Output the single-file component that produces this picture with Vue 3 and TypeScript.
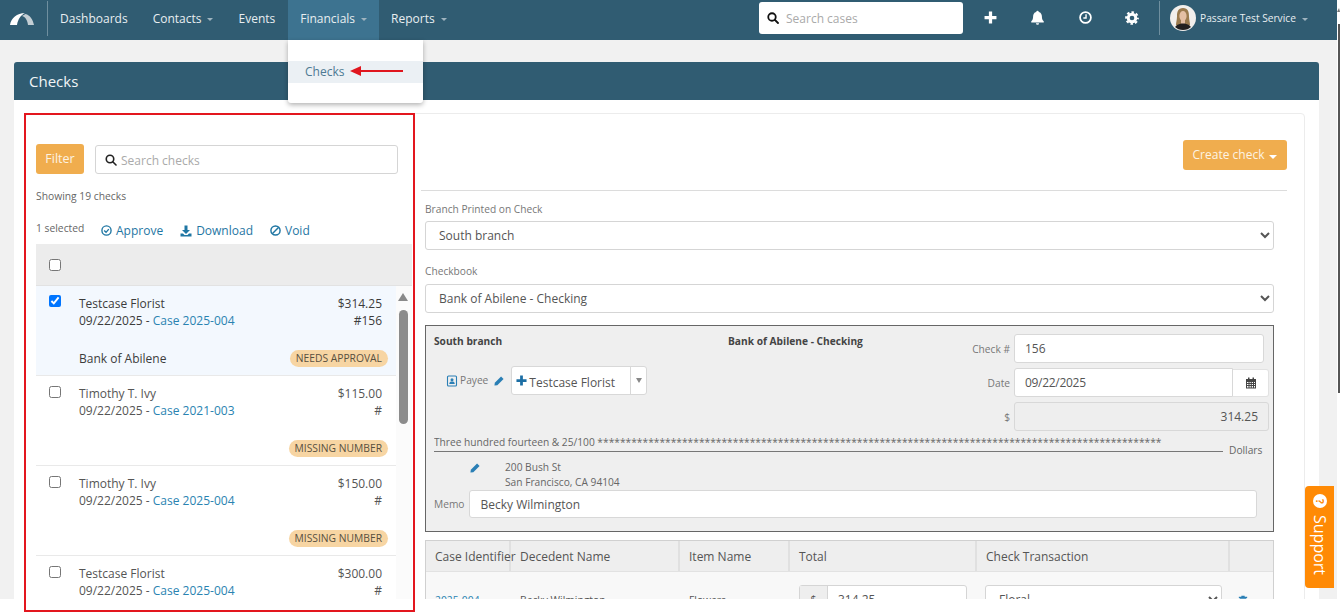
<script setup lang="ts">
interface CheckRow {
  name: string
  caseId: string
  amount: string
  num: string
  bank?: string
  badge: string
  selected?: boolean
}

const navItems = [
  { label: 'Dashboards', caret: false },
  { label: 'Contacts', caret: true },
  { label: 'Events', caret: false },
  { label: 'Financials', caret: true, active: true },
  { label: 'Reports', caret: true },
]

const rows: CheckRow[] = [
  { name: 'Testcase Florist', caseId: 'Case 2025-004', amount: '$314.25', num: '#156', bank: 'Bank of Abilene', badge: 'NEEDS APPROVAL', selected: true },
  { name: 'Timothy T. Ivy', caseId: 'Case 2021-003', amount: '$115.00', num: '#', badge: 'MISSING NUMBER' },
  { name: 'Timothy T. Ivy', caseId: 'Case 2025-004', amount: '$150.00', num: '#', badge: 'MISSING NUMBER' },
  { name: 'Testcase Florist', caseId: 'Case 2025-004', amount: '$300.00', num: '#', badge: 'MISSING NUMBER' },
]

const stars = '*'.repeat(100)
</script>

<template>
  <div class="page">
    <div class="shell">
      <div class="main">
        <!-- Top bar -->
        <header class="topbar">
          <div class="logo">
            <svg viewBox="0 0 24 12" width="24" height="12">
              <path d="M0 12C1 5 7 0 15 0 11 2 8 6 7 12z" fill="#fff" />
              <path d="M15.500 1C20 2 23 7 24 12h-6C17.500 8 16 4 12 3z" fill="#c3ced4" />
            </svg>
          </div>
          <nav class="nav">
            <a v-for="item in navItems" :key="item.label" class="nav-item" :class="{ active: item.active }">
              {{ item.label }}<span v-if="item.caret" class="caret"></span>
            </a>
          </nav>
          <div class="top-search">
            <svg viewBox="0 0 24 24" width="12" height="12" fill="none" stroke="#111" stroke-width="3.600">
              <circle cx="10" cy="10" r="7.500" />
              <path d="M15.500 15.500 22 22" stroke-linecap="round" />
            </svg>
            <span>Search cases</span>
          </div>
          <div class="top-icons">
            <svg viewBox="0 0 24 24" width="13" height="13" fill="#fff"><path d="M9 1h6v8h8v6h-8v8H9v-8H1V9h8z" /></svg>
            <svg viewBox="0 0 24 24" width="15" height="15" fill="#fff"><path d="M12 1a2 2 0 0 0-2 2C6.500 3.800 5 6.800 5 10c0 4.500-1.200 6.500-3 8v2h20v-2c-1.800-1.500-3-3.500-3-8 0-3.200-1.500-6.200-5-7a2 2 0 0 0-2-2zM9.500 21a2.500 2.500 0 0 0 5 0z" /></svg>
            <svg viewBox="0 0 24 24" width="13" height="13" fill="none" stroke="#fff" stroke-width="3.200"><circle cx="12" cy="12" r="10" /><path d="M13 6v7H8" stroke-width="2.600" /></svg>
            <svg viewBox="0 0 24 24" width="14" height="14" fill="none" stroke="#fff">
              <circle cx="12" cy="12" r="6.500" stroke-width="5" />
              <circle cx="12" cy="12" r="10" stroke-width="3.500" stroke-dasharray="4.300 3.550" stroke-dashoffset="2.100" />
            </svg>
          </div>
          <div class="top-user">
            <svg class="avatar" viewBox="0 0 26 26" width="26" height="26">
              <circle cx="13" cy="13" r="13" fill="#f2efec" />
              <clipPath id="avatar-clip"><circle cx="13" cy="13" r="12" /></clipPath>
              <g clip-path="url(#avatar-clip)">
                <path d="M13 3c-5 0-6 4-6 8 0 4-1 6-1 9h14c0-3-1-5-1-9 0-4-1-8-6-8z" fill="#9a7a4e" />
                <ellipse cx="13" cy="11" rx="3.600" ry="5" fill="#e4bfa4" />
                <path d="M11 15h4v4h-4z" fill="#e4bfa4" />
                <path d="M4 26c0-5 4-7.500 9-7.500s9 2.500 9 7.500z" fill="#23201f" />
              </g>
            </svg>
            <span>Passare Test Service</span><span class="caret"></span>
          </div>
        </header>

        <div class="content">
          <div class="panel-title">Checks</div>
          <div class="panel">
            <div class="card">
              <!-- Check list -->
              <section class="left">
                <div class="filter-row">
                  <button class="btn-orange filter">Filter</button>
                  <div class="list-search">
                    <svg viewBox="0 0 24 24" width="12" height="12" fill="none" stroke="#222" stroke-width="3.200">
                      <circle cx="10" cy="10" r="7.500" />
                      <path d="M15.500 15.500 22 22" stroke-linecap="round" />
                    </svg>
                    <span>Search checks</span>
                  </div>
                </div>
                <div class="showing">Showing 19 checks</div>
                <div class="actions">
                  <span class="sel-count">1 selected</span>
                  <a class="action first">
                    <svg viewBox="0 0 24 24" width="11" height="11" fill="none" stroke="currentColor" stroke-width="3"><circle cx="12" cy="12" r="10" /><path d="m7 12 4 4 6-7" /></svg>
                    Approve
                  </a>
                  <a class="action">
                    <svg viewBox="0 0 24 24" width="12" height="12" fill="currentColor"><path d="M9 1h6v9h5l-8 8-8-8h5zM1 17h5l3 3h6l3-3h5v6H1z" /></svg>
                    Download
                  </a>
                  <a class="action">
                    <svg viewBox="0 0 24 24" width="11" height="11" fill="none" stroke="currentColor" stroke-width="3.200"><circle cx="12" cy="12" r="10" /><path d="M5 19 19 5" /></svg>
                    Void
                  </a>
                </div>
                <div class="list-head"><input type="checkbox" /></div>
                <div class="list-body">
                  <div class="rows">
                    <div v-for="(row, i) in rows" :key="i" class="row" :class="{ selected: row.selected }">
                      <input type="checkbox" :checked="row.selected" />
                      <div class="row-main">
                        <div class="row-line">
                          <span class="row-name">{{ row.name }}</span>
                          <span>{{ row.amount }}</span>
                        </div>
                        <div class="row-line">
                          <span>09/22/2025 - <a class="link">{{ row.caseId }}</a></span>
                          <span>{{ row.num }}</span>
                        </div>
                        <div class="row-foot">
                          <span class="row-name">{{ row.bank }}</span>
                          <span class="badge">{{ row.badge }}</span>
                        </div>
                      </div>
                    </div>
                  </div>
                  <div class="list-scroll">
                    <span class="scroll-up"></span>
                    <span class="scroll-thumb"></span>
                  </div>
                </div>
              </section>

              <!-- Check details -->
              <section class="right">
                <div class="create-row">
                  <button class="btn-orange create">Create check<span class="caret white"></span></button>
                </div>
                <div class="form">
                  <label class="field-label">Branch Printed on Check</label>
                  <select class="select"><option>South branch</option></select>
                  <label class="field-label second">Checkbook</label>
                  <select class="select"><option>Bank of Abilene - Checking</option></select>

                  <div class="check-box">
                    <div class="check-top">
                      <div class="check-left">
                        <div class="check-names">
                          <b>South branch</b>
                          <b>Bank of Abilene - Checking</b>
                        </div>
                        <div class="payee-row">
                          <svg viewBox="0 0 24 24" width="12" height="12" fill="none" stroke="#2a7fb5" stroke-width="2.200">
                            <rect x="3" y="2" width="18" height="20" rx="2" />
                            <circle cx="12" cy="9.500" r="3" fill="#2a7fb5" stroke="none" />
                            <path d="M6.500 18c0-4 2.500-5 5.500-5s5.500 1 5.500 5z" fill="#2a7fb5" stroke="none" />
                          </svg>
                          <span class="muted">Payee</span>
                          <svg class="pencil" viewBox="0 0 24 24" width="10" height="10" fill="#2a7fb5"><path d="M17 1l6 6L8 22l-7 1 1-7z" /></svg>
                          <div class="combo">
                            <span class="combo-text">
                              <svg viewBox="0 0 24 24" width="11" height="11" fill="#1c6ea4"><path d="M9 1h6v8h8v6h-8v8H9v-8H1V9h8z" /></svg>
                              <span>Testcase Florist</span>
                            </span>
                            <span class="combo-arrow"><i></i></span>
                          </div>
                        </div>
                      </div>
                      <div class="check-right">
                        <div class="num-row">
                          <span class="muted">Check #</span>
                          <div class="input check-num">156</div>
                        </div>
                        <div class="num-row">
                          <span class="muted">Date</span>
                          <div class="input date">09/22/2025</div>
                          <div class="date-addon">
                            <svg viewBox="0 0 24 24" width="12" height="12" fill="#444"><path d="M2 4h4V1h3v3h6V1h3v3h4v19H2zm2 6v2h3v-2zm5 0v2h2.500v-2zm4.500 0v2H16v-2zm4.500 0v2h2v-2zM4 14v2h3v-2zm5 0v2h2.500v-2zm4.500 0v2H16v-2zm4.500 0v2h2v-2zM4 18v3h3v-3zm5 0v3h2.500v-3zm4.500 0v3H16v-3zm4.500 0v3h2v-3z" fill-rule="evenodd" /></svg>
                          </div>
                        </div>
                        <div class="num-row">
                          <span class="muted">$</span>
                          <div class="input amount">314.25</div>
                        </div>
                      </div>
                    </div>
                    <div class="words-row">
                      <div class="words">Three hundred fourteen &amp; 25/100 <span class="stars">{{ stars }}</span></div>
                      <span class="dollars">Dollars</span>
                    </div>
                    <div class="address">
                      <svg class="pencil" viewBox="0 0 24 24" width="10" height="10" fill="#2a7fb5"><path d="M17 1l6 6L8 22l-7 1 1-7z" /></svg>
                      <div>200 Bush St<br />San Francisco, CA 94104</div>
                    </div>
                    <div class="memo-row">
                      <span class="muted">Memo</span>
                      <div class="input memo">Becky Wilmington</div>
                    </div>
                  </div>

                  <div class="items">
                    <div class="items-head">
                      <span>Case Identifier</span>
                      <span>Decedent Name</span>
                      <span>Item Name</span>
                      <span>Total</span>
                      <span>Check Transaction</span>
                      <span></span>
                    </div>
                    <div class="items-row">
                      <a class="link">2025-004</a>
                      <span>Becky Wilmington</span>
                      <span>Flowers</span>
                      <div class="total"><i>$</i><em>314.25</em></div>
                      <select class="select small"><option>Floral</option></select>
                      <svg viewBox="0 0 24 24" width="10" height="12" fill="#2a7fb5"><path d="M8 2h8v2h6v3H2V4h6zM4 8h16v15H4z" /></svg>
                    </div>
                  </div>
                </div>
              </section>
            </div>
          </div>
        </div>

        <!-- Menu open over the page -->
        <div class="menu">
          <div class="menu-item">Checks</div>
        </div>
        <svg class="menu-arrow" viewBox="0 0 54 12" width="54" height="12">
          <path d="M10 6h43" stroke="#e0161e" stroke-width="1.800" />
          <path d="M0 6l11-5v10z" fill="#e0161e" />
        </svg>

        <div class="support">
          <span class="support-q">?</span>
          <span>Support</span>
        </div>
      </div>

      <div class="page-scroll"><i></i><span></span></div>
    </div>

    <div class="red-box"></div>
  </div>
</template>

<style>
html,
body {
  margin: 0;
  background: #fff;
}
</style>

<style scoped>
.page {
  position: relative;
  width: 1340px;
  height: 612px;
  overflow: hidden;
  background: #fff;
  font-family: "Open Sans", "Liberation Sans", sans-serif;
  font-size: 12px;
  color: #555;
}
.shell {
  display: flex;
  height: 599px;
  overflow: hidden;
}
.main {
  position: relative;
  flex: 1;
  min-width: 0;
  background: #f1f1f1;
}

/* ── Top bar ── */
.topbar {
  display: flex;
  align-items: stretch;
  height: 40px;
  background: #305c72;
  color: #e8eef1;
}
.logo {
  display: flex;
  align-items: center;
  justify-content: center;
  width: 48px;
  height: 35px;
  margin-top: 1px;
  border-right: 1px solid #6f8f9f;
  box-sizing: border-box;
  padding-right: 3px;
}
.nav {
  display: flex;
}
.nav-item {
  display: flex;
  align-items: center;
  padding: 0 13px 4px 12px;
  font-size: 12px;
}
.nav-item.active {
  background: #3d7390;
  padding-right: 12px;
}
.caret {
  display: inline-block;
  width: 0;
  height: 0;
  margin-left: 6px;
  margin-top: 2px;
  border-left: 3px solid transparent;
  border-right: 3px solid transparent;
  border-top: 3px solid #9fb4bf;
}
.caret.white {
  margin-left: 5px;
  border-left-width: 4px;
  border-right-width: 4px;
  border-top: 4px solid #fff;
}
.top-search {
  display: flex;
  align-items: center;
  gap: 7px;
  width: 204px;
  height: 32px;
  margin: 2px 0 0 auto;
  padding-left: 8px;
  box-sizing: border-box;
  background: #fff;
  border-radius: 3px;
  color: #aaa;
  font-size: 12px;
}
.top-icons {
  display: flex;
  align-items: center;
  justify-content: space-between;
  width: 155px;
  margin-left: 21px;
  padding-bottom: 5px;
  box-sizing: border-box;
}
.top-user {
  display: flex;
  align-items: center;
  width: 178px;
  height: 34px;
  margin: 1px 0 0 20px;
  padding-left: 10px;
  box-sizing: border-box;
  border-left: 1px solid #6f8f9f;
  font-size: 10.200px;
}
.avatar {
  margin-right: 4px;
  flex-shrink: 0;
}

/* ── Panel ── */
.content {
  padding: 22px 18px 0 14px;
}
.panel-title {
  height: 38px;
  line-height: 38px;
  padding-left: 15px;
  background: #305c72;
  color: #f1f5f7;
  font-size: 15px;
  border-radius: 3px 3px 0 0;
}
.panel {
  background: #fff;
  padding: 13px 14px 0 11px;
  height: 500px;
  box-sizing: border-box;
}
.card {
  display: flex;
  height: 600px;
  border: 1px solid #ececec;
  border-radius: 4px;
  box-sizing: border-box;
  padding-left: 10px;
}

/* ── Left column ── */
.left {
  width: 376px;
  flex-shrink: 0;
  padding-top: 30px;
}
.filter-row {
  display: flex;
  align-items: flex-start;
  gap: 11px;
}
.btn-orange {
  border: none;
  background: #f0ad4e;
  color: #fdf3e3;
  font-family: inherit;
  border-radius: 3px;
}
.filter {
  width: 48px;
  height: 30px;
  padding: 0 0 2px;
  font-size: 12.500px;
}
.list-search {
  display: flex;
  align-items: center;
  gap: 4px;
  width: 303px;
  height: 29px;
  margin-top: 1px;
  padding: 1px 0 0 9px;
  box-sizing: border-box;
  border: 1px solid #d5d5d5;
  border-radius: 3px;
  color: #aaa;
  font-size: 12px;
}
.showing {
  margin-top: 14px;
  line-height: 16px;
  font-size: 10.300px;
  color: #666;
}
.actions {
  display: flex;
  align-items: center;
  height: 24px;
  margin: 14px 0 2px;
}
.sel-count {
  width: 65px;
  font-size: 10.300px;
  color: #666;
  margin-top: -5px;
}
.action {
  display: flex;
  align-items: center;
  gap: 4px;
  margin-right: 17px;
  color: #1f76a3;
  font-size: 12px;
  margin-top: 1px;
}
.list-head {
  display: flex;
  align-items: center;
  height: 41px;
  padding-left: 13px;
  background: #ececec;
  border-bottom: 1px solid #e2e2e2;
}
.list-head input,
.row input {
  width: 12px;
  height: 12px;
  margin: 0;
  flex-shrink: 0;
}
.list-body {
  display: flex;
}
.rows {
  width: 360px;
}
.row {
  display: flex;
  height: 90px;
  padding: 9px 14px 0 13px;
  box-sizing: border-box;
  border-bottom: 1px solid #e9e9e9;
}
.row:not(.selected) input {
  margin-top: 1px;
}
.row.selected {
  background: #f3f8fe;
}
.row.selected .row-name,
.row.selected .row-line {
  color: #3c3c3c;
}
.row-main {
  flex: 1;
  margin-left: 18px;
  min-width: 0;
}
.row-line {
  display: flex;
  justify-content: space-between;
  line-height: 17px;
  font-size: 12px;
}
.row-foot {
  display: flex;
  justify-content: space-between;
  align-items: center;
  height: 18px;
  margin-top: 20px;
  margin-right: -6px;
  font-size: 12px;
}
.link {
  color: #2a83b1;
}
.badge {
  height: 17px;
  line-height: 17px;
  padding: 0 6px;
  border-radius: 9px;
  background: #f7d5a3;
  color: #57503f;
  font-size: 10.300px;
}
.list-scroll {
  position: relative;
  width: 16px;
  background: #fbfbfb;
}
.scroll-up {
  position: absolute;
  left: 2px;
  top: 7px;
  border-left: 5px solid transparent;
  border-right: 5px solid transparent;
  border-bottom: 8px solid #8a8a8a;
}
.scroll-thumb {
  position: absolute;
  left: 3px;
  top: 24px;
  width: 9px;
  height: 114px;
  border-radius: 5px;
  background: #8c8c8c;
}

/* ── Right column ── */
.right {
  flex: 1;
  min-width: 0;
  margin-left: 9px;
  padding-right: 17px;
}
.create-row {
  display: flex;
  justify-content: flex-end;
  padding-top: 26px;
  padding-bottom: 20px;
  border-bottom: 1px solid #dcdcdc;
}
.create {
  width: 104px;
  height: 30px;
  padding: 0 0 2px;
  font-size: 12px;
}
.form {
  padding: 11px 13px 0 4px;
}
.field-label {
  display: block;
  line-height: 15px;
  margin-bottom: 4px;
  font-size: 10.200px;
  color: #777;
}
.field-label.second {
  margin-top: 14px;
  margin-bottom: 5px;
}
.select {
  display: block;
  width: 100%;
  height: 29px;
  padding: 0 9px;
  box-sizing: border-box;
  background: #fff;
  border: 1px solid #d5d5d5;
  border-radius: 3px;
  font-family: inherit;
  font-size: 12px;
  color: #555;
}
.check-box {
  height: 207px;
  margin-top: 12px;
  padding: 8px 4px 0 8px;
  box-sizing: border-box;
  background: #efefef;
  border: 1px solid #666;
  font-size: 10.200px;
}
.check-top {
  display: flex;
  height: 97px;
}
.check-left {
  flex: 1;
  min-width: 0;
}
.check-names {
  display: flex;
  gap: 235px;
  line-height: 15px;
  color: #444;
}
.check-names b {
  font-weight: 700;
}
.check-names b:first-child {
  width: 59px;
  white-space: nowrap;
}
.payee-row {
  display: flex;
  align-items: center;
  margin: 17px 0 0 12px;
  height: 29px;
}
.payee-row .muted {
  margin: -2px 6px 0 2px;
}
.muted {
  color: #777;
}
.pencil {
  flex-shrink: 0;
}
.combo {
  display: flex;
  width: 136px;
  height: 29px;
  margin-left: 7px;
  box-sizing: border-box;
  background: #fff;
  border: 1px solid #d8d8d8;
  border-radius: 3px;
}
.combo-text {
  flex: 1;
  display: flex;
  align-items: center;
  gap: 2px;
  padding-left: 4px;
  font-size: 12px;
  color: #555;
}
.combo-text span {
  padding-top: 3px;
}
.combo-arrow {
  display: flex;
  align-items: center;
  justify-content: center;
  width: 15px;
  border-left: 1px solid #d8d8d8;
}
.combo-arrow i {
  border-left: 3px solid transparent;
  border-right: 3px solid transparent;
  border-top: 5px solid #888;
}
.check-right {
  display: flex;
  flex-direction: column;
  gap: 5px;
  width: 300px;
}
.num-row {
  display: flex;
  align-items: center;
  justify-content: flex-end;
  gap: 4px;
  height: 29px;
  text-align: right;
}
.input {
  display: flex;
  align-items: center;
  height: 29px;
  padding: 0 10px;
  box-sizing: border-box;
  background: #fff;
  border: 1px solid #d8d8d8;
  border-radius: 3px;
  color: #555;
  font-size: 12px;
}
.check-num {
  width: 250px;
  margin-right: 5px;
}
.date {
  width: 219px;
  letter-spacing: -0.3px;
  border-radius: 3px 0 0 3px;
}
.date-addon {
  display: flex;
  align-items: center;
  justify-content: center;
  width: 36px;
  height: 28px;
  margin-left: -4px;
  box-sizing: border-box;
  background: #fff;
  border: 1px solid #e2e2e2;
  border-left: none;
  border-radius: 0 3px 3px 0;
}
.amount {
  width: 255px;
  justify-content: flex-end;
  background: #eee;
}
.words-row {
  display: flex;
  align-items: flex-end;
  height: 18px;
  margin-top: 3px;
}
.words {
  width: 789px;
  height: 16px;
  line-height: 14px;
  white-space: nowrap;
  overflow: hidden;
  border-bottom: 1px solid #777;
  color: #666;
}
.stars {
  letter-spacing: 0.03px;
}
.dollars {
  margin-left: 6px;
  margin-bottom: -5px;
  line-height: 14px;
  color: #666;
}
.address {
  display: flex;
  margin: 8px 0 0 36px;
  line-height: 15px;
  color: #666;
}
.address .pencil {
  margin: 3px 25px 0 0;
}
.memo-row {
  display: flex;
  align-items: center;
  gap: 5px;
}
.memo {
  width: 788px;
  height: 28px;
}
.items {
  margin-top: 8px;
  background: #f8f8f8;
  border: 1px solid #d0d0d0;
  border-bottom: none;
  height: 70px;
}
.items-head,
.items-row {
  display: grid;
  grid-template-columns: 85px 169px 110px 187px 253px 1fr;
  align-items: center;
}
.items-head {
  height: 30px;
  background: #eee;
  border-bottom: 1px solid #e2e2e2;
  font-size: 12px;
  white-space: nowrap;
}
.items-head span {
  display: flex;
  align-items: center;
  height: 30px;
  padding-left: 9px;
  box-sizing: border-box;
  border-right: 2px solid #e0e0e0;
}
.items-head span:last-child {
  border-right: none;
}
.items-row {
  padding-top: 13px;
  font-size: 10.300px;
}
.items-row > a,
.items-row > span {
  padding-left: 9px;
}
.total {
  display: flex;
  margin-left: 9px;
  width: 168px;
  height: 29px;
  box-sizing: border-box;
  background: #fff;
  border: 1px solid #d5d5d5;
  border-radius: 3px;
}
.total i {
  width: 27px;
  line-height: 27px;
  text-align: center;
  background: #eee;
  font-style: normal;
  border-right: 1px solid #d5d5d5;
}
.total em {
  padding-left: 10px;
  line-height: 27px;
  font-style: normal;
  font-size: 12px;
}
.select.small {
  width: 237px;
  margin-left: 8px;
}
.items-row svg {
  margin-left: 8px;
}

/* ── Things over the page ── */
.menu {
  position: absolute;
  left: 288px;
  top: 40px;
  width: 135px;
  height: 63px;
  padding-top: 21px;
  box-sizing: border-box;
  background: #fff;
  border-radius: 0 0 3px 3px;
  box-shadow: 0 2px 5px rgba(0, 0, 0, 0.3);
}
.menu-item {
  height: 22px;
  line-height: 21px;
  padding-left: 17px;
  background: #ebf0f4;
  color: #4d7a93;
  font-size: 12px;
}
.menu-arrow {
  position: absolute;
  left: 350px;
  top: 65px;
}
.support {
  position: absolute;
  left: 1305px;
  top: 486px;
  display: flex;
  align-items: center;
  gap: 7px;
  width: 29px;
  height: 102px;
  padding-top: 8px;
  box-sizing: border-box;
  writing-mode: vertical-rl;
  background: #ff8a05;
  color: #fff;
  font-size: 16px;
  border-radius: 4px 0 0 4px;
}
.support-q {
  width: 14px;
  height: 14px;
  line-height: 14px;
  text-align: center;
  border-radius: 50%;
  background: #fff;
  color: #ff8a05;
  font-size: 10px;
  font-weight: 700;
}
.page-scroll {
  position: relative;
  width: 3px;
  background: #fff;
}
.page-scroll i {
  position: absolute;
  left: 0;
  top: 8px;
  border-left: 2px solid transparent;
  border-right: 1px solid transparent;
  border-bottom: 4px solid #777;
}
.page-scroll span {
  position: absolute;
  left: 1px;
  top: 24px;
  width: 2px;
  height: 369px;
  background: #555;
}
.red-box {
  position: absolute;
  left: 24px;
  top: 113px;
  width: 391px;
  height: 499px;
  box-sizing: border-box;
  border: 2px solid #e3161e;
  pointer-events: none;
}
</style>
